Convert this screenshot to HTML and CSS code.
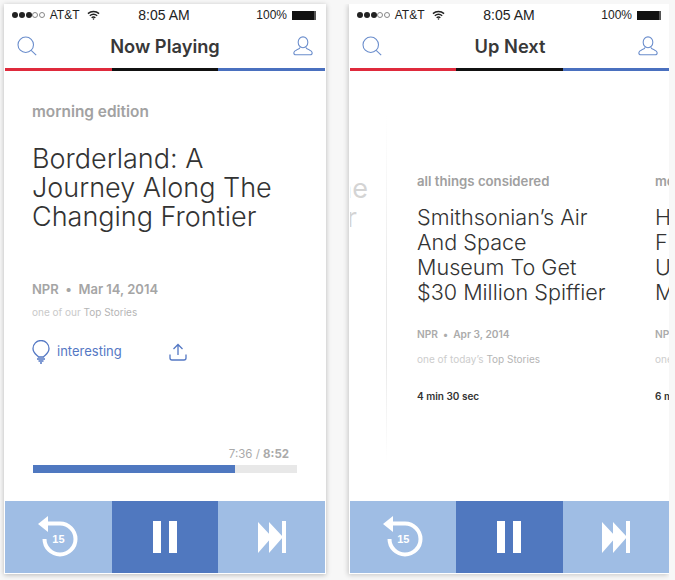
FILE: index.html
```html
<!DOCTYPE html>
<html lang="en">
  <head>
    <meta charset="UTF-8" />
    <title>Now Playing</title>
    <link rel="stylesheet" href="styles.css">
  </head>

  <body>
    <svg class="defs" width="0" height="0">
      <symbol id="search" viewBox="0 0 24 24">
        <circle cx="10.500" cy="10.500" r="9.300" />
        <path d="M17 17.300l6 5.700" />
      </symbol>
      <symbol id="user" viewBox="0 0 24 24">
        <ellipse cx="12" cy="7.500" rx="5.800" ry="6.500" />
        <path d="M8.600 13.500c-.2 1.800-2 2.400-4.200 3.200-2.200.9-3.400 1.800-3.400 3.300 0 1.500.9 2.500 2.500 2.500h17c1.600 0 2.500-1 2.500-2.500 0-1.500-1.200-2.400-3.400-3.300-2.200-.8-4-1.400-4.200-3.200" />
      </symbol>
      <symbol id="back" viewBox="0 0 42 44">
        <path class="ring" d="M7.500 24a15.500 15.500 0 1 0 15.500-15.500h-13" />
        <path class="solid" d="M11 1v16L1 9z" />
      </symbol>
      <symbol id="pause" viewBox="0 0 24 32">
        <path class="solid" d="M0 0h8v32H0zM16 0h8v32h-8z" />
      </symbol>
      <symbol id="next" viewBox="0 0 28 32">
        <path class="solid" d="M0 1l14 15L0 32zM11 1l14 15-14 16zM24 0h4v32h-4z" />
      </symbol>
    </svg>

    <section class="phone">
      <div class="status">
        <span class="carrier">
          <i class="dot"></i><i class="dot"></i><i class="dot"></i><i class="dot off"></i><i class="dot off"></i>
          <span class="att">AT&amp;T</span>
          <svg class="wifi" width="13" height="10" viewBox="0 0 14 10"><path d="M1 3.500c3.500-3 8.500-3 12 0M3 5.800c2.400-2 5.600-2 8 0M5 8c1.200-1 2.800-1 4 0" /><circle cx="7" cy="9.200" r=".8" /></svg>
        </span>
        <span class="clock">8:05 AM</span>
        <span class="power">100% <i class="battery"></i></span>
      </div>
      <header class="nav">
        <svg class="nav-icon"><use href="#search" /></svg>
        <h1>Now Playing</h1>
        <svg class="nav-icon"><use href="#user" /></svg>
      </header>
      <div class="tricolor"><i class="red"></i><i class="black"></i><i class="blue"></i></div>

      <main class="now">
        <p class="show">morning edition</p>
        <h2 class="headline">Borderland: A Journey Along The Changing Frontier</h2>
        <p class="byline">NPR <b>•</b> Mar 14, 2014</p>
        <p class="note">one of our <span>Top Stories</span></p>
        <div class="actions">
          <svg class="bulb" width="18" height="24" viewBox="0 0 18 24">
            <path d="M6.500 17c-.3-1.500-5.500-3-5.500-8.500a8 8 0 0 1 16 0c0 5.500-5.200 7-5.500 8.500z" />
            <path d="M5 19h8M6.500 21h5M8 23h2" />
          </svg>
          <span class="tag">interesting</span>
          <svg class="share" width="18" height="18" viewBox="0 0 18 18">
            <path d="M9 12V1.500M4.500 6L9 1.500 13.500 6M1 11.500v3.500a2 2 0 0 0 2 2h12a2 2 0 0 0 2-2v-3.500" />
          </svg>
        </div>
        <div class="progress">
          <p class="time">7:36 / <b>8:52</b></p>
          <div class="track"><div class="fill" style="width: 76.500%"></div></div>
        </div>
      </main>

      <footer class="controls">
        <button class="ctl"><span class="back"><svg width="42" height="44"><use href="#back" /></svg><span class="fifteen">15</span></span></button>
        <button class="ctl on"><svg width="24" height="32"><use href="#pause" /></svg></button>
        <button class="ctl"><svg width="28" height="32"><use href="#next" /></svg></button>
      </footer>
    </section>

    <section class="phone phone-cut">
      <div class="status">
        <span class="carrier">
          <i class="dot"></i><i class="dot"></i><i class="dot"></i><i class="dot off"></i><i class="dot off"></i>
          <span class="att">AT&amp;T</span>
          <svg class="wifi" width="13" height="10" viewBox="0 0 14 10"><path d="M1 3.500c3.500-3 8.500-3 12 0M3 5.800c2.400-2 5.600-2 8 0M5 8c1.200-1 2.800-1 4 0" /><circle cx="7" cy="9.200" r=".8" /></svg>
        </span>
        <span class="clock">8:05 AM</span>
        <span class="power">100% <i class="battery"></i></span>
      </div>
      <header class="nav">
        <svg class="nav-icon"><use href="#search" /></svg>
        <h1>Up Next</h1>
        <svg class="nav-icon"><use href="#user" /></svg>
      </header>
      <div class="tricolor"><i class="red"></i><i class="black"></i><i class="blue"></i></div>

      <main class="queue">
        <div class="prev">
          <p>he</p>
          <p class="prev-short">r</p>
        </div>
        <article class="card">
          <p class="card-show">all things considered</p>
          <h2 class="card-title">Smithsonian’s Air<br>And Space<br>Museum To Get<br>$30 Million Spiffier</h2>
          <p class="card-by">NPR <b>•</b> Apr 3, 2014</p>
          <p class="card-note">one of today’s <span>Top Stories</span></p>
          <p class="card-len">4 min 30 sec</p>
        </article>
        <article class="card card-next">
          <p class="card-show">mo</p>
          <h2 class="card-title">H<br>Fl<br>U<br>M</h2>
          <p class="card-by">NP</p>
          <p class="card-note">one</p>
          <p class="card-len">6 m</p>
        </article>
      </main>

      <footer class="controls">
        <button class="ctl"><span class="back"><svg width="42" height="44"><use href="#back" /></svg><span class="fifteen">15</span></span></button>
        <button class="ctl on"><svg width="24" height="32"><use href="#pause" /></svg></button>
        <button class="ctl"><svg width="28" height="32"><use href="#next" /></svg></button>
      </footer>
    </section>
  </body>
</html>
```

FILE: styles.css
```css
* {
  box-sizing: border-box;
}

body {
  margin: 0;
  width: 675px;
  height: 580px;
  padding: 4px 0 6px 4px;
  display: flex;
  gap: 23px;
  overflow: hidden;
  background-color: #f7f7f7;
  font-family: "Inter", "Liberation Sans", sans-serif;
}

p,
h1,
h2 {
  margin: 0;
  font-weight: normal;
}

.defs {
  position: absolute;
}

.phone {
  width: 322px;
  padding: 0 1px 1px;
  display: flex;
  flex-direction: column;
  background-color: #fff;
  box-shadow: 0 1px 5px rgba(0, 0, 0, 0.25);
}

.phone-cut {
  width: 320px;
  padding-right: 0;
  box-shadow: -1px 1px 5px rgba(0, 0, 0, 0.2);
  clip-path: inset(0 0 -8px -8px);
}

.status {
  height: 22px;
  padding: 0 9px 0 7px;
  display: grid;
  grid-template-columns: 1fr auto 1fr;
  align-items: center;
  font-family: "Liberation Sans", sans-serif;
  font-size: 12px;
  color: #222;
}

.phone-cut .status {
  padding-right: 8px;
}

.phone-cut .nav {
  padding-right: 11px;
}

.carrier {
  display: flex;
  align-items: center;
  gap: 0.75px;
}

.dot {
  width: 6px;
  height: 6px;
  border-radius: 50%;
  background-color: #222;
}

.dot.off {
  background: none;
  border: 1px solid #888;
}

.att {
  margin: 0 7px 0 4px;
}

.wifi path {
  fill: none;
  stroke: #222;
  stroke-width: 1.500;
}

.wifi circle {
  fill: #222;
}

.clock {
  font-size: 14px;
}

.power {
  justify-self: end;
  display: flex;
  align-items: center;
  gap: 5px;
}

.battery {
  width: 24px;
  height: 9px;
  background-color: #111;
  border-right: 2px solid #555;
}

.nav {
  height: 42px;
  padding: 0 12px 2px;
  display: flex;
  justify-content: space-between;
  align-items: center;
}

.nav h1 {
  font-size: 18.300px;
  font-weight: 600;
  color: #383838;
}

.nav-icon {
  width: 20px;
  height: 20px;
}

.nav-icon use {
  fill: none;
  stroke: #6a8dcc;
  stroke-width: 1.300;
}

.tricolor {
  height: 3px;
  display: flex;
}

.tricolor i {
  flex: 1;
}

.red {
  background-color: #df2a3c;
}

.black {
  background-color: #111;
}

.blue {
  background-color: #4a70bf;
}

.now {
  flex: 1;
  padding: 31px 28px 0 27px;
  display: flex;
  flex-direction: column;
}

.show {
  font-size: 15.400px;
  font-weight: 600;
  color: #a2a2a2;
}

.headline {
  margin-top: 23px;
  width: 250px;
  font-size: 27px;
  font-weight: 300;
  line-height: 29px;
  color: #333;
}

.byline {
  margin-top: 50px;
  font-size: 13px;
  font-weight: 600;
  color: #a5a5a5;
}

.byline b {
  margin: 0 4px;
}

.note {
  margin-top: 9px;
  font-size: 10px;
  color: #c9c9c9;
}

.note span,
.card-note span {
  color: #b5b5b5;
}

.actions {
  margin-top: 22px;
  display: flex;
  align-items: center;
}

.bulb path,
.share path {
  fill: none;
  stroke: #5478c4;
  stroke-width: 1.300;
}

.tag {
  margin: 0 47px 0 7px;
  padding-bottom: 2px;
  font-size: 13px;
  color: #5478c4;
}

.progress {
  margin-top: auto;
  margin-bottom: 28px;
  padding-left: 1px;
}

.time {
  padding-right: 8px;
  text-align: right;
  font-size: 11.500px;
  color: #aaa;
}

.track {
  margin-top: 4px;
  height: 8px;
  background-color: #e8e8e8;
}

.fill {
  height: 100%;
  background-color: #4f78c0;
}

.queue {
  flex: 1;
  display: flex;
  overflow: hidden;
}

.prev {
  flex: none;
  width: 37px;
  height: 345px;
  margin-top: 45px;
  padding: 58px 18px 0 0;
  border-right: 1px solid #eee;
  border-image: linear-gradient(#fff, #e9e9e9 50%, #e9e9e9 70%, #fff) 1;
  overflow: hidden;
  font-size: 27px;
  font-weight: 300;
  line-height: 29px;
  color: #d4d4d4;
}

.prev p {
  display: flex;
  justify-content: flex-end;
}

.prev-short {
  padding-right: 11px;
}

.card {
  flex: none;
  width: 268px;
  padding: 102px 0 0 30px;
  white-space: nowrap;
}

.card-next {
  width: 20px;
  padding-left: 0;
  overflow: hidden;
}

.card-show {
  font-size: 13.200px;
  font-weight: 600;
  color: #a0a0a0;
}

.card-title {
  margin-top: 16px;
  font-size: 21.600px;
  font-weight: 300;
  line-height: 25px;
  color: #333;
}

.card-by {
  margin-top: 23px;
  font-size: 10.200px;
  font-weight: 600;
  color: #ababab;
}

.card-by b {
  margin: 0 3px;
}

.card-note {
  margin-top: 13px;
  font-size: 10px;
  color: #cdcdcd;
}

.card-len {
  margin-top: 25px;
  font-size: 10px;
  font-weight: 600;
  color: #333;
}

.controls {
  height: 72px;
  display: flex;
}

.ctl {
  flex: 1;
  padding: 0;
  border: none;
  display: flex;
  justify-content: center;
  align-items: center;
  background-color: #9fbde4;
}

.ctl.on {
  background-color: #5078bf;
}

.solid {
  fill: #fff;
}

.ring {
  fill: none;
  stroke: #fff;
  stroke-width: 4;
}

.back {
  position: relative;
  display: block;
  height: 44px;
}

.fifteen {
  position: absolute;
  left: 15px;
  top: 18px;
  font-size: 11px;
  font-weight: 800;
  color: #fff;
}
```
